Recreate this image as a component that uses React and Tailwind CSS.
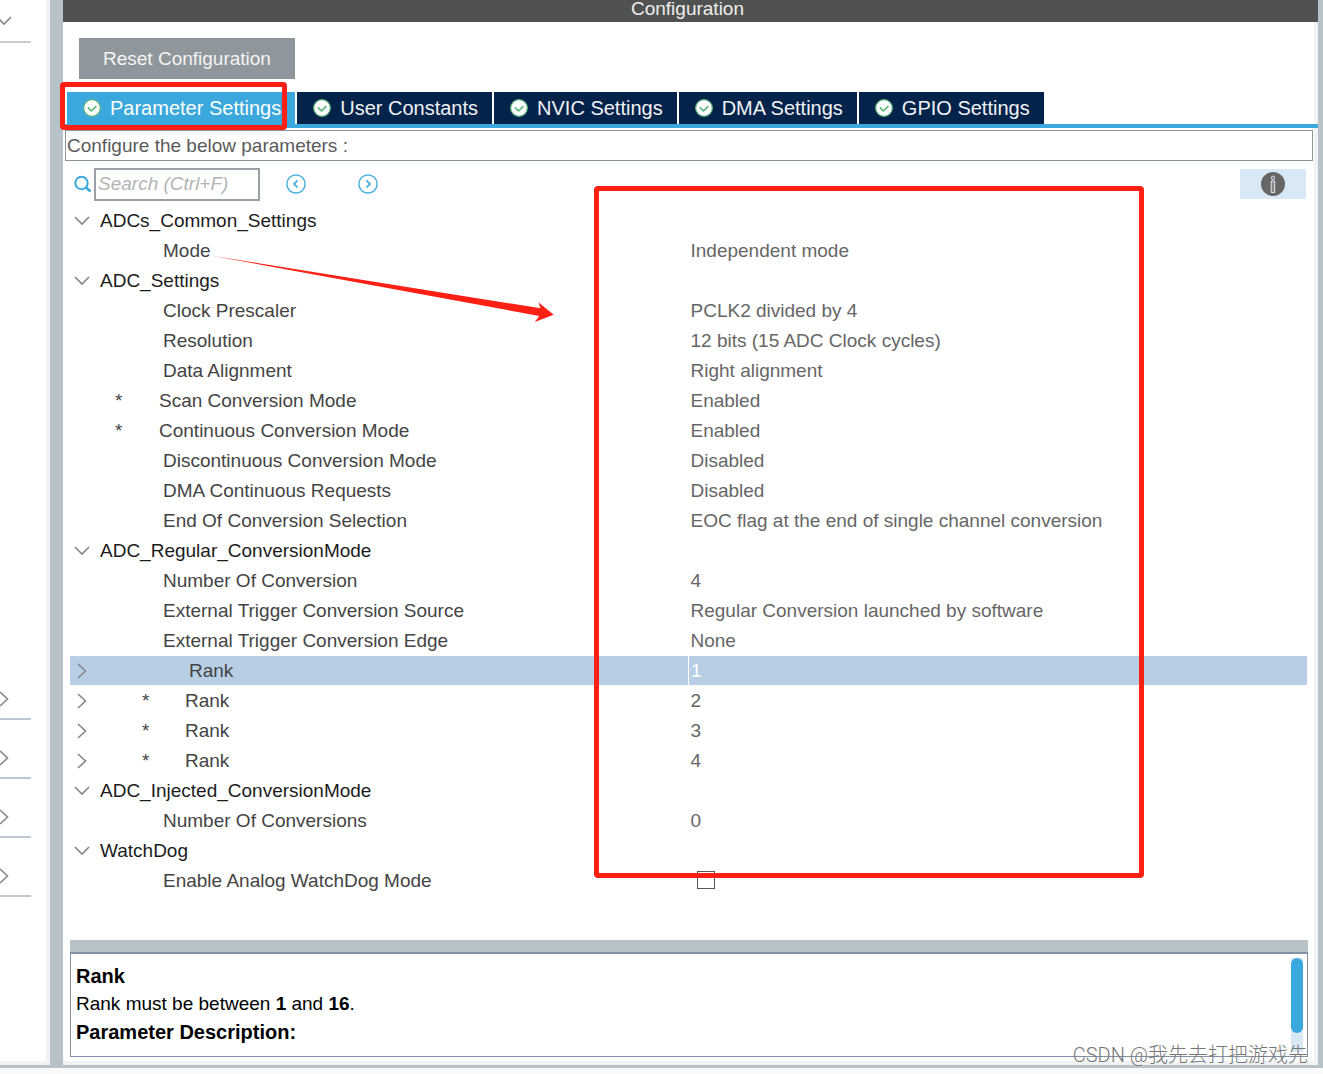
import React from 'react';

const tabs = [
  { name: 'Parameter Settings', active: true },
  { name: 'User Constants' },
  { name: 'NVIC Settings' },
  { name: 'DMA Settings' },
  { name: 'GPIO Settings' },
];

const rows = [
  { group: 'ADCs_Common_Settings' },
  { label: 'Mode', value: 'Independent mode' },
  { group: 'ADC_Settings' },
  { label: 'Clock Prescaler', value: 'PCLK2 divided by 4' },
  { label: 'Resolution', value: '12 bits (15 ADC Clock cycles)' },
  { label: 'Data Alignment', value: 'Right alignment' },
  { label: 'Scan Conversion Mode', value: 'Enabled', changed: true },
  { label: 'Continuous Conversion Mode', value: 'Enabled', changed: true },
  { label: 'Discontinuous Conversion Mode', value: 'Disabled' },
  { label: 'DMA Continuous Requests', value: 'Disabled' },
  { label: 'End Of Conversion Selection', value: 'EOC flag at the end of single channel conversion' },
  { group: 'ADC_Regular_ConversionMode' },
  { label: 'Number Of Conversion', value: '4' },
  { label: 'External Trigger Conversion Source', value: 'Regular Conversion launched by software' },
  { label: 'External Trigger Conversion Edge', value: 'None' },
  { label: 'Rank', value: '1', nested: true, selected: true },
  { label: 'Rank', value: '2', nested: true, changed: true },
  { label: 'Rank', value: '3', nested: true, changed: true },
  { label: 'Rank', value: '4', nested: true, changed: true },
  { group: 'ADC_Injected_ConversionMode' },
  { label: 'Number Of Conversions', value: '0' },
  { group: 'WatchDog' },
  { label: 'Enable Analog WatchDog Mode', checkbox: true },
];

function ChevronDown() {
  return (
    <svg className="h-4 w-4 shrink-0" viewBox="0 0 16 16" fill="none" stroke="#868686" strokeWidth="1.6">
      <path d="M1 4l7 7 7-7" />
    </svg>
  );
}

function ChevronRight() {
  return (
    <svg className="h-4 w-4 shrink-0" viewBox="0 0 16 16" fill="none" stroke="#868686" strokeWidth="1.6">
      <path d="M4 1l7.500 7-7.500 7" />
    </svg>
  );
}

function CheckIcon() {
  return (
    <svg className="h-[18px] w-[18px] shrink-0" viewBox="0 0 18 18" fill="none">
      <circle cx="9" cy="9" r="8.300" fill="#fff" stroke="#5cb87c" strokeWidth="1.2" />
      <path d="M4.800 8.300l3.700 3.500 5-4.600" stroke="#5cb87c" strokeWidth="1.7" />
    </svg>
  );
}

function CircleArrow({ d }) {
  return (
    <svg className="h-5 w-5" viewBox="0 0 20 20" fill="none" stroke="#4db1e0">
      <circle cx="10" cy="10" r="9.100" strokeWidth="1.5" />
      <path d={d} strokeWidth="1.8" />
    </svg>
  );
}

function Sidebar() {
  return (
    <aside className="w-[50px] shrink-0 border-r-4 border-b-4 border-[#f0f2f4] bg-white">
      <button className="flex h-[43px] w-[31px] items-center border-b-2 border-[#c5cdd2]" aria-label="Collapse">
        <span className="-ml-1 flex"><ChevronDown /></span>
      </button>
      <div className="mt-[618px]">
        {[1, 2, 3, 4].map((n) => (
          <button
            key={n}
            className="flex h-[59px] w-[31px] items-center border-b-2 border-[#bcc9d4] pt-[18px]"
            aria-label="Expand category"
          >
            <span className="-ml-1 flex"><ChevronRight /></span>
          </button>
        ))}
      </div>
    </aside>
  );
}

function Row({ row }) {
  if (row.group) {
    return (
      <tr className="h-[30px]">
        <th colSpan={2} scope="rowgroup" className="p-0 pt-[2px] text-left font-normal text-[#1c1c1c]">
          <button className="flex items-center gap-[10px] pl-1">
            <ChevronDown />
            {row.group}
          </button>
        </th>
      </tr>
    );
  }

  return (
    <tr className={row.selected ? 'h-[30px] border-t border-white bg-[#b8cee5]' : 'h-[30px]'}>
      <th scope="row" className="p-0 pt-[2px] text-left font-normal text-[#444]">
        <div className="flex items-center pl-1">
          <span className="flex w-4">{row.nested && <ChevronRight />}</span>
          <span className={row.nested ? 'w-[95px] pl-[52px]' : 'w-[69px] pl-[25px]'}>{row.changed && '*'}</span>
          {row.checkbox ? (
            <label htmlFor="watchdog" className="pl-1">{row.label}</label>
          ) : (
            <span className={row.changed ? '' : 'pl-1'}>{row.label}</span>
          )}
        </div>
      </th>
      {row.checkbox ? (
        <td className="p-0 pl-2">
          <input
            id="watchdog"
            type="checkbox"
            className="block h-[18px] w-[18px] appearance-none border border-[#555] bg-white"
          />
        </td>
      ) : (
        <td
          className={
            row.selected
              ? 'border-l border-white p-0 pt-[2px] pl-[2px] text-white'
              : 'p-0 pt-[2px] pl-[2px] text-[#666]'
          }
        >
          {row.value}
        </td>
      )}
    </tr>
  );
}

function Description() {
  return (
    <div className="flex justify-between border border-t-2 border-[#8292a5] bg-white py-1 pr-1 pl-[5px] text-black">
      <div className="pt-1 pb-[6px] leading-7">
        <p className="text-[20px] font-bold">Rank</p>
        <p>
          Rank must be between <b>1</b> and <b>16</b>.
        </p>
        <p className="text-[20px] font-bold">Parameter Description:</p>
      </div>
      <div className="w-3 bg-[#d9e8f5]">
        <div className="h-[75px] rounded-full bg-[#3aa8dc]" />
      </div>
    </div>
  );
}

// Red marks drawn over the panel
function Annotations() {
  return (
    <>
      <div className="pointer-events-none absolute top-[82px] left-[60px] h-12 w-[227px] rounded border-[5px] border-[#ff2015]" />
      <div className="pointer-events-none absolute top-[186px] left-[594px] h-[692px] w-[550px] rounded border-[5px] border-[#ff2015]" />
      <svg className="pointer-events-none absolute top-[250px] left-[208px] h-[80px] w-[350px]" viewBox="208 250 350 80">
        <path d="M211.700 255.700L540.600 308.300L538.300 302.300L553.700 314.700L534.700 322L539.300 316Z" fill="#ff2015" />
      </svg>
    </>
  );
}

function App() {
  return (
    <div className="relative min-h-screen bg-[#f8fafb] font-['Liberation_Sans',Arial,sans-serif] text-[19px] leading-6">
      <div className="flex border-b-[3px] border-[#b8c3c9] bg-[#b8c3c9] pr-[5px]">
        <Sidebar />
        <main className="ml-[13px] min-w-0 grow border-r-4 border-b-4 border-[#f0f2f4] bg-white">
          <h1 className="-mr-1 h-[22px] bg-[#4f5250] pr-[6px] text-center leading-[17px] text-[#eee]">Configuration</h1>

          <div className="px-4 pt-4 pb-[13px]">
            <button className="h-[41px] bg-[#8f979c] px-6 text-[#f4f4f4]">Reset Configuration</button>
          </div>

          <div role="tablist" className="-mr-1 flex gap-[2px] border-b-4 border-[#3aa8dc] pl-1 text-[20px]">
            {tabs.map((tab) => (
              <button
                key={tab.name}
                role="tab"
                aria-selected={!!tab.active}
                className={
                  tab.active
                    ? 'flex h-8 items-center gap-[9px] bg-[#3aa8dc] pr-[14px] pl-4 text-white'
                    : 'flex h-8 items-center gap-[9px] bg-[#03234b] pr-[14px] pl-4 text-[#f0f2f4]'
                }
              >
                <CheckIcon />
                {tab.name}
              </button>
            ))}
          </div>

          <div className="mt-[2px] mr-px ml-[2px] border border-[#8c959b] pt-[3px] pb-[2px] pl-px text-[#5a5a5a]">
            Configure the below parameters :
          </div>

          <div className="flex h-11 items-center pt-[2px] pr-2 pl-[11px]">
            <svg className="h-[18px] w-[18px]" viewBox="0 0 18 18" fill="none" stroke="#3aa8dc" strokeWidth="2">
              <circle cx="7.500" cy="8" r="6.200" />
              <path d="M12 12.500l4.500 4" strokeWidth="2.500" />
            </svg>
            <input
              type="search"
              aria-label="Search"
              placeholder="Search (Ctrl+F)"
              className="ml-[2px] h-[33px] w-[166px] border-2 border-[#9aa1a6] px-[2px] italic placeholder:text-[#b4b4b4]"
            />
            <button className="ml-[26px]" aria-label="Previous match"><CircleArrow d="M11.500 6.500L8 10l3.500 3.500" /></button>
            <button className="ml-[52px]" aria-label="Next match"><CircleArrow d="M8.500 6.500L12 10l-3.500 3.500" /></button>
            <button className="ml-auto flex h-[30px] w-[66px] items-center justify-center bg-[#d9e8f5]" aria-label="Info">
              <svg className="h-6 w-6" viewBox="0 0 24 24">
                <circle cx="12" cy="12" r="12" fill="#666" />
                <circle cx="12" cy="5.800" r="1.700" fill="#777" stroke="#d9e8f5" strokeWidth="0.900" />
                <path d="M10.200 9h3.500v11.500h-3.500z" fill="#888" stroke="#d9e8f5" strokeWidth="1" />
              </svg>
            </button>
          </div>

          <div className="px-[7px]">
            <table className="w-full table-fixed border-collapse">
              <colgroup>
                <col className="w-1/2" />
                <col className="w-1/2" />
              </colgroup>
              <tbody>
                {rows.map((row, i) => (
                  <Row key={i} row={row} />
                ))}
              </tbody>
            </table>
          </div>

          <div className="pt-[45px] pr-[6px] pb-1 pl-[7px]">
            <div className="h-3 bg-[#b8c3c9]" />
            <Description />
          </div>
        </main>
      </div>

      <Annotations />
      <div className="absolute top-[1043px] right-[15px] font-[Roboto,'Noto_Sans_CJK_SC',sans-serif] text-[20px] font-light text-[#777]">
        CSDN @我先去打把游戏先
      </div>
    </div>
  );
}

export default App;
